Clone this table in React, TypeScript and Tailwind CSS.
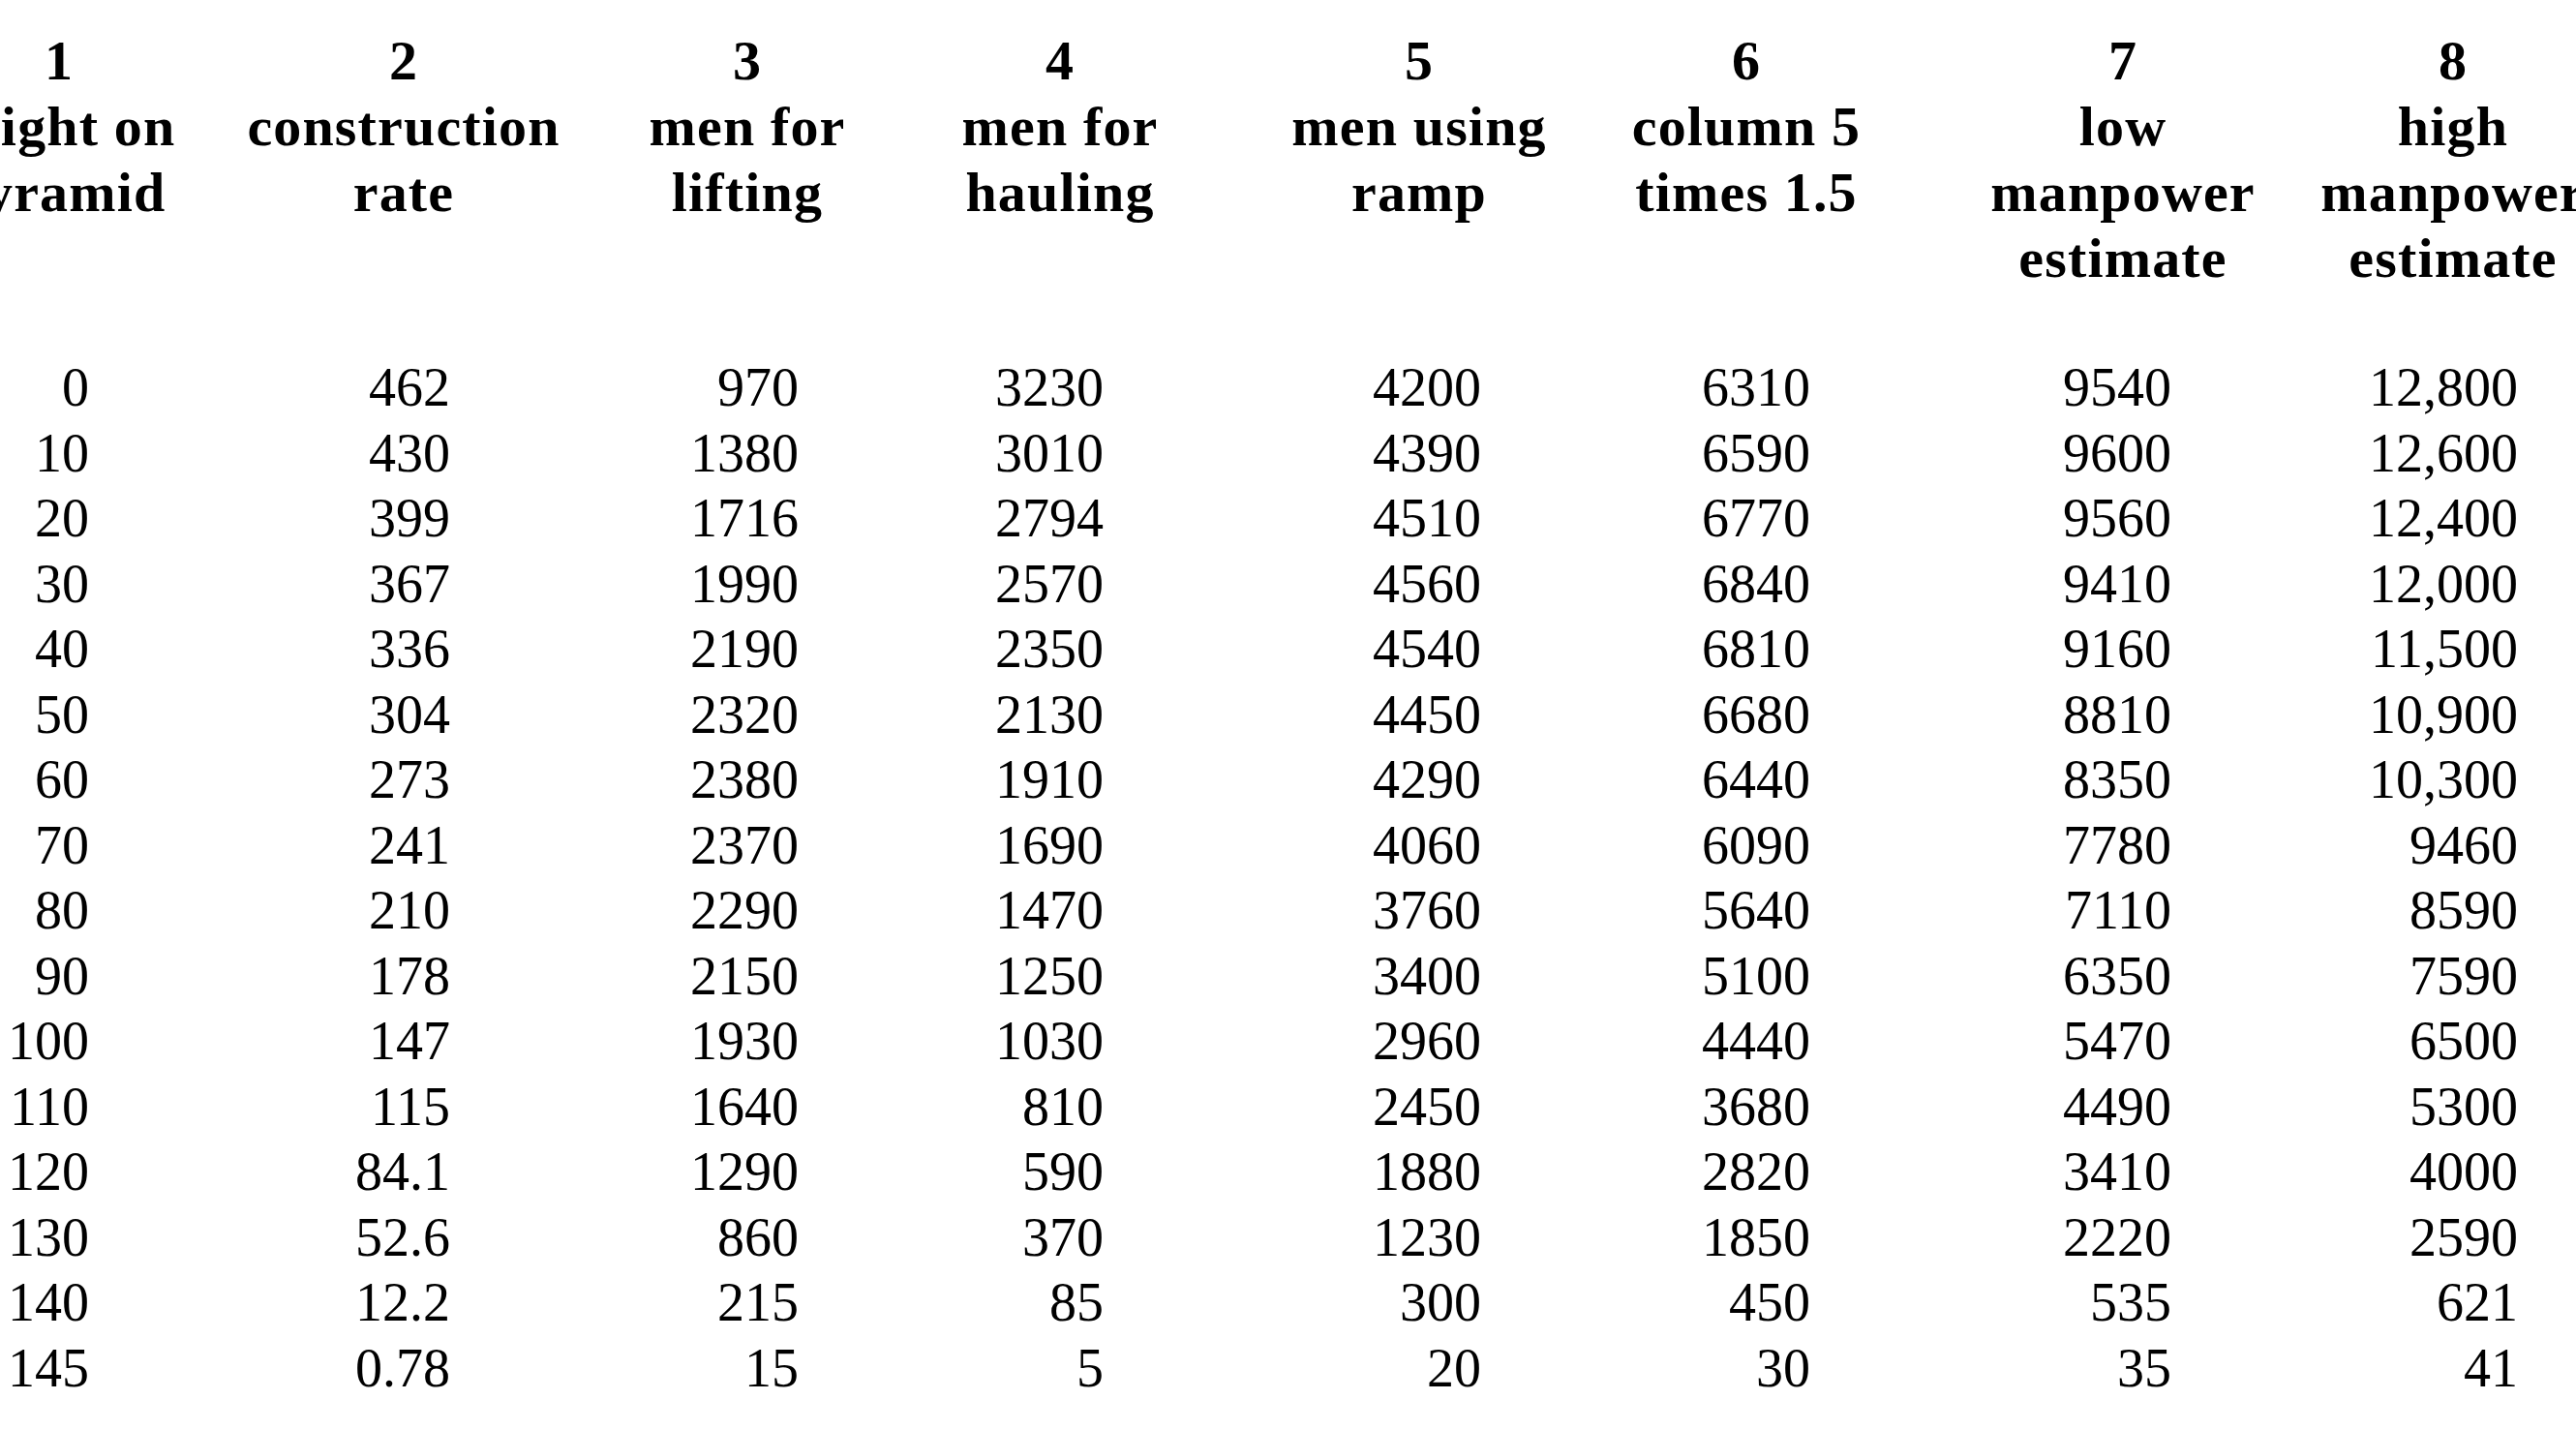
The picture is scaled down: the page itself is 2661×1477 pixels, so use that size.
const headers = [
  ['1', 'height on', 'pyramid'],
  ['2', 'construction', 'rate'],
  ['3', 'men for', 'lifting'],
  ['4', 'men for', 'hauling'],
  ['5', 'men using', 'ramp'],
  ['6', 'column 5', 'times 1.5'],
  ['7', 'low', 'manpower', 'estimate'],
  ['8', 'high', 'manpower', 'estimate'],
];

// right padding puts each column's numbers on its own tab stop
const valuePad = [
  'pr-[90px]',
  'pr-[187px]',
  'pr-[67px]',
  'pr-[158px]',
  'pr-[104px]',
  'pr-[104px]',
  'pr-[169px]',
  'pr-[55px]',
];

const rows = [
  ['0', '462', '970', '3230', '4200', '6310', '9540', '12,800'],
  ['10', '430', '1380', '3010', '4390', '6590', '9600', '12,600'],
  ['20', '399', '1716', '2794', '4510', '6770', '9560', '12,400'],
  ['30', '367', '1990', '2570', '4560', '6840', '9410', '12,000'],
  ['40', '336', '2190', '2350', '4540', '6810', '9160', '11,500'],
  ['50', '304', '2320', '2130', '4450', '6680', '8810', '10,900'],
  ['60', '273', '2380', '1910', '4290', '6440', '8350', '10,300'],
  ['70', '241', '2370', '1690', '4060', '6090', '7780', '9460'],
  ['80', '210', '2290', '1470', '3760', '5640', '7110', '8590'],
  ['90', '178', '2150', '1250', '3400', '5100', '6350', '7590'],
  ['100', '147', '1930', '1030', '2960', '4440', '5470', '6500'],
  ['110', '115', '1640', '810', '2450', '3680', '4490', '5300'],
  ['120', '84.1', '1290', '590', '1880', '2820', '3410', '4000'],
  ['130', '52.6', '860', '370', '1230', '1850', '2220', '2590'],
  ['140', '12.2', '215', '85', '300', '450', '535', '621'],
  ['145', '0.78', '15', '5', '20', '30', '35', '41'],
];

const gridCols =
  'grid grid-cols-[242px_470px_240px_406px_336px_340px_438px_244px]';

export default function App() {
  return (
    <main className="w-screen h-screen overflow-hidden bg-white text-black font-['Liberation_Serif',serif]">
      <div className="ml-[-60px] pt-[29px]">
        <div className={`${gridCols} leading-[68px]`}>
          {headers.map(lines => (
            <div
              key={lines[0]}
              className="flex flex-col items-center font-bold text-[58px] tracking-[0.02em]"
            >
              {lines.map(line => (
                <span key={line} className="whitespace-nowrap">
                  {line}
                </span>
              ))}
            </div>
          ))}
        </div>

        <div className={`${gridCols} mt-[66px] text-[56px] leading-[67.5px]`}>
          {rows.map(row =>
            row.map((value, i) => (
              <div
                key={`${row[0]}-${i}`}
                className={`text-right whitespace-nowrap ${valuePad[i]}`}
              >
                {value}
              </div>
            ))
          )}
        </div>
      </div>
    </main>
  );
}
